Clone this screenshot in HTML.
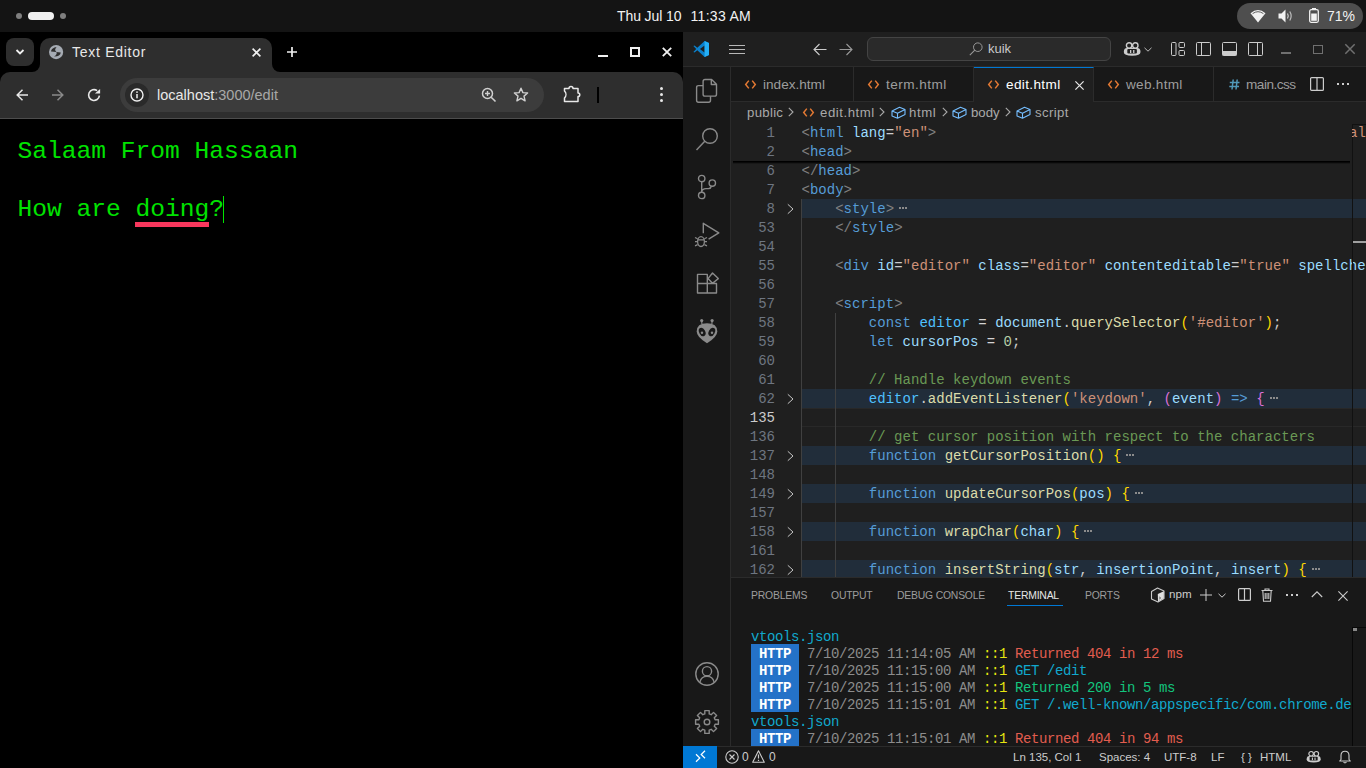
<!DOCTYPE html>
<html><head><meta charset="utf-8">
<style>
*{box-sizing:border-box}
html,body{margin:0;padding:0}
body{width:1366px;height:768px;overflow:hidden;position:relative;background:#141414;font-family:"Liberation Sans",sans-serif;color:#ccc}
.a{position:absolute}
.mono{font-family:"Liberation Mono",monospace}
svg{position:absolute;overflow:visible}
/* editor */
.ln{position:absolute;left:731px;width:44px;height:19px;padding-top:1px;text-align:right;font:14px/19px "Liberation Mono",monospace;color:#6e7681}
.cl{position:absolute;left:801.5px;height:19px;width:565px;overflow:hidden;white-space:pre;padding-top:1px;letter-spacing:0.017px;font:14px/19px "Liberation Mono",monospace;color:#ccc}
.fold{position:absolute;left:801px;width:565px;height:19px;background:#212d3a}
.t{color:#808080}.n{color:#569cd6}.at{color:#9cdcfe}.s{color:#ce9178}.k{color:#569cd6}.v{color:#9cdcfe}.c{color:#4fc1ff}
.f{color:#dcdcaa}.cm{color:#6a9955}.b1{color:#ffd700}.b2{color:#da70d6}.op{color:#d4d4d4}.nm{color:#b5cea8}
.el{display:inline-block;position:relative;width:14px;height:1px}.el::before{content:"";position:absolute;left:5px;top:-5px;width:2px;height:2px;background:#8b8b8b;box-shadow:3px 0 #8b8b8b,6px 0 #8b8b8b}
.tr{position:absolute;left:751px;height:17px;white-space:pre;font:14px/17px "Liberation Mono",monospace;letter-spacing:-0.4px}
.hb{color:#fff;font-weight:bold}
.gy{color:#8c8c8c}.yl{color:#e5e510}.rd{color:#e25d4f}.cy{color:#11a8cd}.gr{color:#13c47d}
.tab{position:absolute;top:67px;height:34px;background:#181818;border-right:1px solid #2b2b2b;font-size:13.5px;color:#9d9d9d}
</style></head>
<body>

<!-- ============ GNOME TOP BAR ============ -->
<div class="a" style="left:0;top:0;width:1366px;height:32px;background:#141414"></div>
<div class="a" style="left:16px;top:13px;width:6px;height:6px;border-radius:3px;background:#7f7f7f"></div>
<div class="a" style="left:28px;top:12px;width:26px;height:8px;border-radius:4px;background:#f0f0f0"></div>
<div class="a" style="left:60px;top:13px;width:6px;height:6px;border-radius:3px;background:#7f7f7f"></div>
<div class="a" style="left:617px;top:8px;font-size:14px;line-height:17px;letter-spacing:-0.1px;color:#f2f2f2;white-space:pre">Thu Jul 10</div>
<div class="a" style="left:690.5px;top:8px;font-size:14px;line-height:17px;letter-spacing:0.3px;color:#f2f2f2;white-space:pre">11:33 AM</div>
<div class="a" style="left:1237px;top:3px;width:126px;height:26px;border-radius:13px;background:#4e4e4e"></div>
<!-- wifi -->
<svg style="left:1250px;top:9px" width="16" height="14" viewBox="0 0 16 14"><path d="M0.5 4.2 Q8 -2 15.5 4.2 L8 13.5 Z" fill="#f2f2f2"/><path d="M2.6 4.6 Q8 0.8 13.4 4.6" stroke="#4e4e4e" stroke-width="0.9" fill="none"/></svg>
<!-- volume -->
<svg style="left:1278px;top:9px" width="16" height="14" viewBox="0 0 16 14"><path d="M0.5 4.5 H3.5 L7.5 0.5 V13.5 L3.5 9.5 H0.5 Z" fill="#f2f2f2"/><path d="M9.5 4.5 Q11 7 9.5 9.5" stroke="#cfcfcf" stroke-width="1.2" fill="none"/><path d="M11.8 2.5 Q14.5 7 11.8 11.5" stroke="#bdbdbd" stroke-width="1.2" fill="none"/></svg>
<!-- battery -->
<svg style="left:1309px;top:8px" width="10" height="15" viewBox="0 0 10 15"><rect x="3" y="0" width="4" height="2" fill="#f2f2f2"/><rect x="0.7" y="1.7" width="8.6" height="12.6" rx="1.5" fill="none" stroke="#f2f2f2" stroke-width="1.3"/><rect x="2.2" y="5.5" width="5.6" height="7.3" fill="#f2f2f2"/></svg>
<div class="a" style="left:1327px;top:8px;font-size:14px;line-height:17px;color:#f2f2f2">71%</div>

<!-- ============ CHROME ============ -->
<div class="a" style="left:0;top:32px;width:683px;height:736px;background:#000"></div>
<!-- tab search button -->
<div class="a" style="left:6px;top:38px;width:28px;height:28px;border-radius:8px;background:#2e2e2e"></div>
<svg style="left:14px;top:47px" width="12" height="10" viewBox="0 0 12 10"><path d="M2.5 3 L6 6.5 L9.5 3" stroke="#f0f0f0" stroke-width="1.8" fill="none"/></svg>
<!-- active tab -->
<div class="a" style="left:40px;top:38px;width:232px;height:40px;border-radius:10px 10px 0 0;background:#2e2e2e"></div>
<div class="a" style="left:32px;top:64px;width:8px;height:8px;background:#2e2e2e"></div>
<div class="a" style="left:32px;top:64px;width:8px;height:8px;border-radius:0 0 8px 0;background:#000"></div>
<div class="a" style="left:272px;top:64px;width:9px;height:8px;background:#2e2e2e"></div>
<div class="a" style="left:272px;top:64px;width:9px;height:8px;border-radius:0 0 0 9px;background:#000"></div>
<!-- globe -->
<svg style="left:47px;top:43px" width="18" height="18" viewBox="0 0 18 18"><circle cx="9.1" cy="9.1" r="7.1" fill="#a5abb3"/><path d="M9.6 4.3 C7 4.2 4.2 5.9 4.1 8.4 L9.4 8.9 C7.7 7.7 7.7 5.9 9.6 4.3 Z M9.4 8.9 L13.8 9.6 C13.4 12.2 11.2 13.6 7 13.5 C8.9 12.2 10.3 11 9.4 8.9 Z" fill="#2e2e2e"/></svg>
<div class="a" style="left:72px;top:44px;font-size:14px;line-height:17px;letter-spacing:0.72px;color:#e8e8e8">Text Editor</div>
<svg style="left:251.5px;top:47.5px" width="9" height="9" viewBox="0 0 9 9"><path d="M0.6 0.6 L8.4 8.4 M8.4 0.6 L0.6 8.4" stroke="#f0f0f0" stroke-width="1.6"/></svg>
<svg style="left:287px;top:47px" width="10" height="10" viewBox="0 0 10 10"><path d="M5 0 V10 M0 5 H10" stroke="#f0f0f0" stroke-width="1.7"/></svg>
<!-- window controls -->
<div class="a" style="left:598px;top:55px;width:10px;height:2px;background:#f0f0f0"></div>
<div class="a" style="left:630px;top:47px;width:10px;height:10px;border:2px solid #f0f0f0"></div>
<svg style="left:662px;top:47px" width="10" height="10" viewBox="0 0 10 10"><path d="M0.8 0.8 L9.2 9.2 M9.2 0.8 L0.8 9.2" stroke="#f0f0f0" stroke-width="1.8"/></svg>
<!-- toolbar -->
<div class="a" style="left:0;top:72px;width:683px;height:46px;border-radius:10px 10px 0 0;background:#2e2e2e"></div>
<div class="a" style="left:0;top:118px;width:683px;height:1px;background:#4d4d4d"></div>
<svg style="left:16px;top:89px" width="12" height="12" viewBox="0 0 12 12"><path d="M12 6 H1.2 M6.5 0.8 L1.2 6 L6.5 11.2" stroke="#e8e8e8" stroke-width="1.5" fill="none"/></svg>
<svg style="left:52px;top:89px" width="12" height="12" viewBox="0 0 12 12"><path d="M0 6 H10.8 M5.5 0.8 L10.8 6 L5.5 11.2" stroke="#8a8a8a" stroke-width="1.5" fill="none"/></svg>
<svg style="left:87px;top:88px" width="14" height="14" viewBox="0 0 14 14"><path d="M12.4 7.6 A5.4 5.4 0 1 1 10.1 2.6" stroke="#e8e8e8" stroke-width="1.6" fill="none"/><path d="M7.9 5.5 H13.1 V0.9 Z" fill="#e8e8e8"/></svg>
<div class="a" style="left:120px;top:78px;width:424px;height:34px;border-radius:17px;background:#3c3c3c"></div>
<div class="a" style="left:125px;top:83px;width:24px;height:24px;border-radius:12px;background:#2a2a2a"></div>
<svg style="left:130px;top:88px" width="14" height="14" viewBox="0 0 14 14"><circle cx="7" cy="7" r="6" stroke="#f0f0f0" stroke-width="1.4" fill="none"/><rect x="6.25" y="6" width="1.5" height="4.3" fill="#f0f0f0"/><rect x="6.25" y="3.4" width="1.5" height="1.5" fill="#f0f0f0"/></svg>
<div class="a" style="left:157px;top:86px;font-size:14.5px;line-height:18px;color:#e8e8e8;white-space:pre">localhost<span style="color:#a8a8a8">:3000/edit</span></div>
<svg style="left:481px;top:87px" width="16" height="16" viewBox="0 0 16 16"><circle cx="6.5" cy="6.5" r="5" stroke="#d0d0d0" stroke-width="1.5" fill="none"/><path d="M10.2 10.2 L14.5 14.5" stroke="#d0d0d0" stroke-width="1.6"/><path d="M6.5 4 V9 M4 6.5 H9" stroke="#d0d0d0" stroke-width="1.4"/></svg>
<svg style="left:513px;top:87px" width="16" height="16" viewBox="0 0 16 16"><path d="M8 1.2 L9.9 5.6 L14.6 6 L11 9.1 L12.1 13.8 L8 11.3 L3.9 13.8 L5 9.1 L1.4 6 L6.1 5.6 Z" stroke="#d0d0d0" stroke-width="1.4" fill="none" stroke-linejoin="round"/></svg>
<svg style="left:563px;top:85px" width="18" height="18" viewBox="0 0 18 18"><path d="M1.5 3.5 H6 A2 2 0 0 1 10 3.5 H15 V8 A1.8 1.8 0 0 1 15 11.6 V16.5 H1.5 V13 A5 5 0 0 0 1.5 6 Z" stroke="#e8e8e8" stroke-width="1.5" fill="none" stroke-linejoin="round"/></svg>
<div class="a" style="left:597px;top:87px;width:2px;height:16px;background:#000"></div>
<div class="a" style="left:659.5px;top:86.7px;width:3.4px;height:3.4px;border-radius:1.7px;background:#e8e8e8"></div>
<div class="a" style="left:659.5px;top:92.7px;width:3.4px;height:3.4px;border-radius:1.7px;background:#e8e8e8"></div>
<div class="a" style="left:659.5px;top:98.7px;width:3.4px;height:3.4px;border-radius:1.7px;background:#e8e8e8"></div>
<!-- page -->
<div class="a mono" style="left:17.5px;top:137px;font-size:24.6px;line-height:29px;color:#00e300;white-space:pre">Salaam From Hassaan</div>
<div class="a mono" style="left:17.5px;top:195px;font-size:24.6px;line-height:29px;color:#00e300;white-space:pre">How are doing?</div>
<div class="a" style="left:135px;top:222px;width:74px;height:5px;background:#f8375d"></div>
<div class="a" style="left:223px;top:196px;width:1px;height:27px;background:#00e300"></div>

<!-- ============ VS CODE ============ -->
<div class="a" style="left:683px;top:32px;width:683px;height:736px;background:#1f1f1f"></div>
<!-- title bar -->
<div class="a" style="left:683px;top:32px;width:683px;height:35px;background:#1f1f1f;border-bottom:1px solid #2b2b2b"></div>

<!-- VS logo -->
<svg style="left:693px;top:41px" width="16" height="16" viewBox="0 0 16 16"><path d="M11.6 0 L16 2.1 V13.9 L11.6 16 L4.3 9.3 L1.5 11.6 L0.4 10.9 L3.2 8 L0.4 5.1 L1.5 4.4 L4.3 6.7 Z M6.9 8 L11.6 11.4 V4.6 Z" fill="#0b80cc" fill-rule="evenodd"/><path d="M11.6 0 L16 2.1 V13.9 L11.6 16 Z" fill="#24aef5"/></svg>
<!-- hamburger -->
<svg style="left:729px;top:44px" width="16" height="11" viewBox="0 0 16 11"><path d="M0 1.5 H16 M0 5.5 H16 M0 9.5 H16" stroke="#b8b8b8" stroke-width="1"/></svg>
<svg style="left:813px;top:43px" width="14" height="13" viewBox="0 0 14 13"><path d="M13.5 6.5 H1 M6.5 1 L1 6.5 L6.5 12" stroke="#cccccc" stroke-width="1.1" fill="none"/></svg>
<svg style="left:839px;top:43px" width="14" height="13" viewBox="0 0 14 13"><path d="M0.5 6.5 H13 M7.5 1 L13 6.5 L7.5 12" stroke="#9a9a9a" stroke-width="1.1" fill="none"/></svg>
<!-- command center -->
<div class="a" style="left:867px;top:37px;width:244px;height:24px;border-radius:6px;background:#2a2a2a;border:1px solid #444"></div>
<svg style="left:969px;top:42px" width="14" height="14" viewBox="0 0 14 14"><circle cx="8.8" cy="5.2" r="4.3" stroke="#9a9a9a" stroke-width="1" fill="none"/><path d="M5.8 8.2 L0.8 13.2" stroke="#9a9a9a" stroke-width="1.1"/></svg>
<div class="a" style="left:988px;top:40px;font-size:13px;line-height:17px;color:#c8c8c8">kuik</div>
<!-- copilot -->
<svg style="left:1123px;top:41px" width="18" height="16" viewBox="0 0 18 16"><circle cx="6.1" cy="4.5" r="2.7" stroke="#cccccc" stroke-width="1.4" fill="none"/><circle cx="12.3" cy="4.5" r="2.7" stroke="#cccccc" stroke-width="1.4" fill="none"/><path d="M0.8 11 Q0.8 7 4 7 H14.2 Q17.5 7 17.5 11 Q17.5 14.8 9.2 14.8 Q0.8 14.8 0.8 11 Z" fill="#cccccc"/><rect x="4.3" y="8" width="9.6" height="4.6" rx="1" fill="#1f1f1f"/><rect x="7" y="9" width="1.3" height="3" fill="#cccccc"/><rect x="10.1" y="9" width="1.3" height="3" fill="#cccccc"/></svg>
<svg style="left:1144px;top:47px" width="8" height="5" viewBox="0 0 8 5"><path d="M0.5 0.8 L4 4.2 L7.5 0.8" stroke="#bbbbbb" stroke-width="1" fill="none"/></svg>
<!-- layout icons -->
<svg style="left:1171px;top:42px" width="14" height="14" viewBox="0 0 14 14"><rect x="0.5" y="0.5" width="4.5" height="13" rx="1" stroke="#cccccc" fill="none"/><rect x="8" y="0.5" width="5.5" height="5" rx="1" stroke="#cccccc" fill="none"/><rect x="8" y="8.5" width="5.5" height="5" rx="1" stroke="#cccccc" fill="none"/></svg>
<svg style="left:1196px;top:42px" width="15" height="14" viewBox="0 0 15 14"><rect x="0.5" y="0.5" width="14" height="13" rx="1" stroke="#cccccc" fill="none"/><path d="M5.5 0.5 V13.5" stroke="#cccccc"/></svg>
<svg style="left:1222px;top:42px" width="15" height="14" viewBox="0 0 15 14"><rect x="0.5" y="0.5" width="14" height="13" rx="1" stroke="#cccccc" fill="none"/><rect x="0.5" y="9" width="14" height="4.5" fill="#cccccc"/></svg>
<svg style="left:1248px;top:42px" width="15" height="14" viewBox="0 0 15 14"><rect x="0.5" y="0.5" width="14" height="13" rx="1" stroke="#cccccc" fill="none"/><path d="M9.5 0.5 V13.5" stroke="#cccccc"/></svg>
<!-- vs window controls -->
<div class="a" style="left:1281px;top:52px;width:10px;height:1.5px;background:#707070"></div>
<div class="a" style="left:1313px;top:44.5px;width:9.5px;height:9.5px;border:1.5px solid #707070"></div>
<svg style="left:1345px;top:44px" width="10" height="10" viewBox="0 0 10 10"><path d="M0.3 0.3 L9.7 9.7 M9.7 0.3 L0.3 9.7" stroke="#707070" stroke-width="1.5"/></svg>

<!-- activity bar -->
<div class="a" style="left:683px;top:67px;width:48px;height:679px;background:#181818;border-right:1px solid #2b2b2b"></div>
<svg style="left:695px;top:78px" width="24" height="26" viewBox="0 0 24 26"><path d="M8 7.6 H3.5 Q1.6 7.6 1.6 9.5 V22.3 Q1.6 24.2 3.5 24.2 H13.6 Q15.5 24.2 15.5 22.3 V18.2" stroke="#8a8a8a" stroke-width="1.4" fill="none"/><path d="M10 1.5 H16.6 L21.5 6.3 V16.2 Q21.5 18.1 19.6 18.1 H10 Q8.1 18.1 8.1 16.2 V3.4 Q8.1 1.5 10 1.5 Z M16.3 1.5 V6.5 H21.5" stroke="#8a8a8a" stroke-width="1.4" fill="none" stroke-linejoin="round"/></svg>
<svg style="left:695px;top:127px" width="24" height="24" viewBox="0 0 24 24"><circle cx="15" cy="9" r="7.3" stroke="#8a8a8a" stroke-width="1.4" fill="none"/><path d="M10 14 L1.5 23" stroke="#868686" stroke-width="1.5"/></svg>
<svg style="left:697px;top:174px" width="20" height="26" viewBox="0 0 20 26"><circle cx="4.7" cy="4.6" r="3.2" stroke="#8a8a8a" stroke-width="1.4" fill="none"/><circle cx="4.7" cy="21.4" r="3.2" stroke="#8a8a8a" stroke-width="1.4" fill="none"/><circle cx="15.3" cy="9.1" r="3.2" stroke="#8a8a8a" stroke-width="1.4" fill="none"/><path d="M4.7 7.8 V18.2 M4.7 17.8 Q5.3 14.8 9 14.6 H11.5 Q13.8 14.4 14.4 12.2" stroke="#8a8a8a" stroke-width="1.4" fill="none"/></svg>
<svg style="left:694px;top:222px" width="26" height="26" viewBox="0 0 26 26"><path d="M9.3 11.3 V1.3 L24.8 10.8 L14.6 17.2" stroke="#8a8a8a" stroke-width="1.4" fill="none" stroke-linejoin="round"/><ellipse cx="7" cy="19.6" rx="3.4" ry="4.9" stroke="#8a8a8a" stroke-width="1.3" fill="none"/><path d="M3.8 17.8 H10.2 M1 15.5 L3.6 16.8 M1 19.7 H3.6 M1 23.9 L3.6 22.6 M13 15.5 L10.4 16.8 M13 19.7 H10.4 M13 23.9 L10.4 22.6" stroke="#8a8a8a" stroke-width="1.2" fill="none"/></svg>
<svg style="left:696px;top:272px" width="24" height="24" viewBox="0 0 24 24"><path d="M1.5 2.4 H11.3 V21 H1.5 Z M1.5 11.5 H20.5 V21 H11.3 M16.5 1 L22.3 6.6 L16.5 11.3 L12 6.6 Z" stroke="#8a8a8a" stroke-width="1.4" fill="none" stroke-linejoin="round"/></svg>
<svg style="left:696px;top:318px" width="22" height="26" viewBox="0 0 22 26"><path d="M11 5.3 Q21.3 5.3 21.3 13.5 Q21.3 19 11 25.2 Q0.7 19 0.7 13.5 Q0.7 5.3 11 5.3 Z" fill="#8a8a8a"/><path d="M5.7 2.6 L5.9 6 M16.1 2.6 L15.9 6" stroke="#8a8a8a" stroke-width="1.1"/><circle cx="5.7" cy="2.6" r="1.6" fill="#8a8a8a"/><circle cx="16.1" cy="2.6" r="1.6" fill="#8a8a8a"/><ellipse cx="6.2" cy="14" rx="3" ry="4.4" transform="rotate(-28 6.2 14)" fill="#181818"/><ellipse cx="15.8" cy="14" rx="3" ry="4.4" transform="rotate(28 15.8 14)" fill="#181818"/><circle cx="6" cy="14.7" r="1.2" fill="#8a8a8a"/><circle cx="16" cy="14.7" r="1.2" fill="#8a8a8a"/></svg>
<svg style="left:695px;top:662px" width="24" height="24" viewBox="0 0 24 24"><circle cx="12" cy="12" r="11.2" stroke="#8a8a8a" stroke-width="1.4" fill="none"/><circle cx="12" cy="9.2" r="4.6" stroke="#8a8a8a" stroke-width="1.4" fill="none"/><path d="M4.8 20.3 Q6.3 14.3 12 14.3 Q17.7 14.3 19.2 20.3" stroke="#8a8a8a" stroke-width="1.4" fill="none"/></svg>
<svg style="left:695px;top:710px" width="24" height="24" viewBox="0 0 24 24"><path d="M9.80 3.89 L9.80 0.60 L14.20 0.60 L14.20 3.89 L16.18 4.71 L18.51 2.38 L21.62 5.49 L19.29 7.82 L20.11 9.80 L23.40 9.80 L23.40 14.20 L20.11 14.20 L19.29 16.18 L21.62 18.51 L18.51 21.62 L16.18 19.29 L14.20 20.11 L14.20 23.40 L9.80 23.40 L9.80 20.11 L7.82 19.29 L5.49 21.62 L2.38 18.51 L4.71 16.18 L3.89 14.20 L0.60 14.20 L0.60 9.80 L3.89 9.80 L4.71 7.82 L2.38 5.49 L5.49 2.38 L7.82 4.71 Z" stroke="#8a8a8a" stroke-width="1.4" fill="none" stroke-linejoin="round"/><circle cx="12" cy="12" r="2.8" stroke="#8a8a8a" stroke-width="1.4" fill="none"/></svg>

<!-- tabs -->
<div class="a" style="left:731px;top:67px;width:635px;height:35px;background:#181818;border-bottom:1px solid #2b2b2b"></div>
<div class="tab" style="left:731px;width:123px"></div>
<div class="tab" style="left:854px;width:120px"></div>
<div class="a" style="left:974px;top:67px;width:120px;height:35px;background:#1f1f1f;border-top:1px solid #0078d4;border-right:1px solid #2b2b2b"></div>
<div class="tab" style="left:1094px;width:120px"></div>
<svg style="left:745px;top:80px" width="11" height="9" viewBox="0 0 11 9"><path d="M3.8 0.6 L0.7 4.5 L3.8 8.4 M7.2 0.6 L10.3 4.5 L7.2 8.4" stroke="#e37933" stroke-width="1.5" fill="none"/></svg>
<div class="a" style="left:763px;top:76px;font-size:13.6px;line-height:17px;color:#9d9d9d">index.html</div>
<svg style="left:868px;top:80px" width="11" height="9" viewBox="0 0 11 9"><path d="M3.8 0.6 L0.7 4.5 L3.8 8.4 M7.2 0.6 L10.3 4.5 L7.2 8.4" stroke="#e37933" stroke-width="1.5" fill="none"/></svg>
<div class="a" style="left:886px;top:76px;font-size:13.6px;line-height:17px;letter-spacing:0.45px;color:#9d9d9d">term.html</div>
<svg style="left:988px;top:80px" width="11" height="9" viewBox="0 0 11 9"><path d="M3.8 0.6 L0.7 4.5 L3.8 8.4 M7.2 0.6 L10.3 4.5 L7.2 8.4" stroke="#e37933" stroke-width="1.5" fill="none"/></svg>
<div class="a" style="left:1006px;top:76px;font-size:13.6px;line-height:17px;letter-spacing:0.35px;color:#ffffff">edit.html</div>
<svg style="left:1075px;top:80.5px" width="9" height="9" viewBox="0 0 9 9"><path d="M0.4 0.4 L8.6 8.6 M8.6 0.4 L0.4 8.6" stroke="#e8e8e8" stroke-width="1.2"/></svg>
<svg style="left:1108px;top:80px" width="11" height="9" viewBox="0 0 11 9"><path d="M3.8 0.6 L0.7 4.5 L3.8 8.4 M7.2 0.6 L10.3 4.5 L7.2 8.4" stroke="#e37933" stroke-width="1.5" fill="none"/></svg>
<div class="a" style="left:1126px;top:76px;font-size:13.6px;line-height:17px;letter-spacing:0.28px;color:#9d9d9d">web.html</div>
<svg style="left:1229px;top:79px" width="11" height="11" viewBox="0 0 11 11"><path d="M4.2 0.5 L3 10.5 M8.2 0.5 L7 10.5 M0.8 3.6 H10.5 M0.3 7.4 H10" stroke="#519aba" stroke-width="1.5" fill="none"/></svg>
<div class="a" style="left:1246px;top:76px;font-size:13.6px;line-height:17px;letter-spacing:-0.5px;color:#9d9d9d">main.css</div>
<svg style="left:1310px;top:77px" width="14" height="14" viewBox="0 0 14 14"><rect x="0.6" y="0.6" width="12.8" height="12.8" rx="1" stroke="#cccccc" stroke-width="1.2" fill="none"/><path d="M7 0.6 V13.4" stroke="#cccccc" stroke-width="1.2"/></svg>
<div class="a" style="left:1337px;top:83px;width:2px;height:2px;background:#ccc"></div>
<div class="a" style="left:1342px;top:83px;width:2px;height:2px;background:#ccc"></div>
<div class="a" style="left:1347px;top:83px;width:2px;height:2px;background:#ccc"></div>

<!-- breadcrumbs -->

<!-- breadcrumbs -->
<div class="a" style="left:747px;top:104px;font-size:13.2px;line-height:17px;letter-spacing:0.3px;color:#a9a9a9;white-space:pre">public</div>
<svg style="left:788px;top:107px" width="6" height="10" viewBox="0 0 6 10"><path d="M0.8 0.8 L5 5 L0.8 9.2" stroke="#a9a9a9" stroke-width="1.1" fill="none"/></svg>
<svg style="left:803px;top:108px" width="11" height="9" viewBox="0 0 11 9"><path d="M3.8 0.6 L0.7 4.5 L3.8 8.4 M7.2 0.6 L10.3 4.5 L7.2 8.4" stroke="#e37933" stroke-width="1.5" fill="none"/></svg>
<div class="a" style="left:820px;top:104px;font-size:13.2px;line-height:17px;letter-spacing:0.55px;color:#a9a9a9;white-space:pre">edit.html</div>
<svg style="left:879px;top:107px" width="6" height="10" viewBox="0 0 6 10"><path d="M0.8 0.8 L5 5 L0.8 9.2" stroke="#a9a9a9" stroke-width="1.1" fill="none"/></svg>
<svg style="left:891px;top:105px" width="15" height="14" viewBox="0 0 15 14"><path d="M1 6 L8.5 2.3 L14 4.6 V9.6 L6.5 13.3 L1 11 Z M1 6 L6.5 8.3 L14 4.6 M6.5 8.3 V13.3" stroke="#75beff" stroke-width="1.1" fill="none" stroke-linejoin="round"/></svg>
<div class="a" style="left:909px;top:104px;font-size:13.2px;line-height:17px;letter-spacing:0.6px;color:#a9a9a9;white-space:pre">html</div>
<svg style="left:942px;top:107px" width="6" height="10" viewBox="0 0 6 10"><path d="M0.8 0.8 L5 5 L0.8 9.2" stroke="#a9a9a9" stroke-width="1.1" fill="none"/></svg>
<svg style="left:952px;top:105px" width="15" height="14" viewBox="0 0 15 14"><path d="M1 6 L8.5 2.3 L14 4.6 V9.6 L6.5 13.3 L1 11 Z M1 6 L6.5 8.3 L14 4.6 M6.5 8.3 V13.3" stroke="#75beff" stroke-width="1.1" fill="none" stroke-linejoin="round"/></svg>
<div class="a" style="left:971px;top:104px;font-size:13.2px;line-height:17px;color:#a9a9a9;white-space:pre">body</div>
<svg style="left:1005px;top:107px" width="6" height="10" viewBox="0 0 6 10"><path d="M0.8 0.8 L5 5 L0.8 9.2" stroke="#a9a9a9" stroke-width="1.1" fill="none"/></svg>
<svg style="left:1016px;top:105px" width="15" height="14" viewBox="0 0 15 14"><path d="M1 6 L8.5 2.3 L14 4.6 V9.6 L6.5 13.3 L1 11 Z M1 6 L6.5 8.3 L14 4.6 M6.5 8.3 V13.3" stroke="#75beff" stroke-width="1.1" fill="none" stroke-linejoin="round"/></svg>
<div class="a" style="left:1035px;top:104px;font-size:13.2px;line-height:17px;letter-spacing:0.4px;color:#a9a9a9;white-space:pre">script</div>

<!-- editor -->
<div class="a" style="left:801px;top:408px;width:565px;height:19px;border-top:1px solid #282828;border-bottom:1px solid #282828"></div>
<div class="fold" style="top:199px"></div>
<div class="fold" style="top:389px"></div>
<div class="fold" style="top:446px"></div>
<div class="fold" style="top:484px"></div>
<div class="fold" style="top:522px"></div>
<div class="fold" style="top:560px"></div>
<div class="a" style="left:801px;top:199px;width:1px;height:379px;background:#404040"></div>
<div class="a" style="left:835px;top:313px;width:1px;height:265px;background:#404040"></div>
<div class="ln" style="top:123px;color:#6e7681">1</div>
<div class="ln" style="top:142px;color:#6e7681">2</div>
<div class="ln" style="top:161px;color:#6e7681">6</div>
<div class="ln" style="top:180px;color:#6e7681">7</div>
<div class="ln" style="top:199px;color:#6e7681">8</div>
<div class="ln" style="top:218px;color:#6e7681">53</div>
<div class="ln" style="top:237px;color:#6e7681">54</div>
<div class="ln" style="top:256px;color:#6e7681">55</div>
<div class="ln" style="top:275px;color:#6e7681">56</div>
<div class="ln" style="top:294px;color:#6e7681">57</div>
<div class="ln" style="top:313px;color:#6e7681">58</div>
<div class="ln" style="top:332px;color:#6e7681">59</div>
<div class="ln" style="top:351px;color:#6e7681">60</div>
<div class="ln" style="top:370px;color:#6e7681">61</div>
<div class="ln" style="top:389px;color:#6e7681">62</div>
<div class="ln" style="top:408px;color:#cccccc">135</div>
<div class="ln" style="top:427px;color:#6e7681">136</div>
<div class="ln" style="top:446px;color:#6e7681">137</div>
<div class="ln" style="top:465px;color:#6e7681">148</div>
<div class="ln" style="top:484px;color:#6e7681">149</div>
<div class="ln" style="top:503px;color:#6e7681">157</div>
<div class="ln" style="top:522px;color:#6e7681">158</div>
<div class="ln" style="top:541px;color:#6e7681">161</div>
<div class="ln" style="top:560px;color:#6e7681">162</div>
<svg style="left:787px;top:204px" width="7" height="10" viewBox="0 0 7 10"><path d="M0.8 0.3 L6 5 L0.8 9.7" stroke="#c5c5c5" stroke-width="1" fill="none"/></svg>
<svg style="left:787px;top:394px" width="7" height="10" viewBox="0 0 7 10"><path d="M0.8 0.3 L6 5 L0.8 9.7" stroke="#c5c5c5" stroke-width="1" fill="none"/></svg>
<svg style="left:787px;top:451px" width="7" height="10" viewBox="0 0 7 10"><path d="M0.8 0.3 L6 5 L0.8 9.7" stroke="#c5c5c5" stroke-width="1" fill="none"/></svg>
<svg style="left:787px;top:489px" width="7" height="10" viewBox="0 0 7 10"><path d="M0.8 0.3 L6 5 L0.8 9.7" stroke="#c5c5c5" stroke-width="1" fill="none"/></svg>
<svg style="left:787px;top:527px" width="7" height="10" viewBox="0 0 7 10"><path d="M0.8 0.3 L6 5 L0.8 9.7" stroke="#c5c5c5" stroke-width="1" fill="none"/></svg>
<svg style="left:787px;top:565px" width="7" height="10" viewBox="0 0 7 10"><path d="M0.8 0.3 L6 5 L0.8 9.7" stroke="#c5c5c5" stroke-width="1" fill="none"/></svg>
<div class="cl" style="top:123px"><span class="t">&lt;</span><span class="n">html</span> <span class="at">lang</span>=<span class="s">"en"</span><span class="t">&gt;</span></div>
<div class="cl" style="top:142px"><span class="t">&lt;</span><span class="n">head</span><span class="t">&gt;</span></div>
<div class="cl" style="top:161px"><span class="t">&lt;/</span><span class="n">head</span><span class="t">&gt;</span></div>
<div class="cl" style="top:180px"><span class="t">&lt;</span><span class="n">body</span><span class="t">&gt;</span></div>
<div class="cl" style="top:199px">    <span class="t">&lt;</span><span class="n">style</span><span class="t">&gt;</span><span class="el"></span></div>
<div class="cl" style="top:218px">    <span class="t">&lt;/</span><span class="n">style</span><span class="t">&gt;</span></div>
<div class="cl" style="top:237px"></div>
<div class="cl" style="top:256px">    <span class="t">&lt;</span><span class="n">div</span> <span class="at">id</span>=<span class="s">"editor"</span> <span class="at">class</span>=<span class="s">"editor"</span> <span class="at">contenteditable</span>=<span class="s">"true"</span> <span class="at">spellcheck</span></div>
<div class="cl" style="top:275px"></div>
<div class="cl" style="top:294px">    <span class="t">&lt;</span><span class="n">script</span><span class="t">&gt;</span></div>
<div class="cl" style="top:313px">        <span class="k">const</span> <span class="c">editor</span> <span class="op">=</span> <span class="v">document</span>.<span class="f">querySelector</span><span class="b1">(</span><span class="s">'#editor'</span><span class="b1">)</span>;</div>
<div class="cl" style="top:332px">        <span class="k">let</span> <span class="v">cursorPos</span> <span class="op">=</span> <span class="nm">0</span>;</div>
<div class="cl" style="top:351px"></div>
<div class="cl" style="top:370px">        <span class="cm">// Handle keydown events</span></div>
<div class="cl" style="top:389px">        <span class="c">editor</span>.<span class="f">addEventListener</span><span class="b1">(</span><span class="s">'keydown'</span>, <span class="b2">(</span><span class="v">event</span><span class="b2">)</span> <span class="k">=&gt;</span> <span class="b2">{</span><span class="el"></span></div>
<div class="cl" style="top:408px"></div>
<div class="cl" style="top:427px">        <span class="cm">// get cursor position with respect to the characters</span></div>
<div class="cl" style="top:446px">        <span class="k">function</span> <span class="f">getCursorPosition</span><span class="b1">()</span> <span class="b1">{</span><span class="el"></span></div>
<div class="cl" style="top:465px"></div>
<div class="cl" style="top:484px">        <span class="k">function</span> <span class="f">updateCursorPos</span><span class="b1">(</span><span class="v">pos</span><span class="b1">)</span> <span class="b1">{</span><span class="el"></span></div>
<div class="cl" style="top:503px"></div>
<div class="cl" style="top:522px">        <span class="k">function</span> <span class="f">wrapChar</span><span class="b1">(</span><span class="v">char</span><span class="b1">)</span> <span class="b1">{</span><span class="el"></span></div>
<div class="cl" style="top:541px"></div>
<div class="cl" style="top:560px">        <span class="k">function</span> <span class="f">insertString</span><span class="b1">(</span><span class="v">str</span>, <span class="v">insertionPoint</span>, <span class="v">insert</span><span class="b1">)</span> <span class="b1">{</span><span class="el"></span></div>
<div class="a" style="left:733px;top:161px;width:617px;height:3px;background:linear-gradient(#000 0,#000 1px,rgba(0,0,0,0.45) 2px,rgba(0,0,0,0) 3px)"></div>
<div class="a" style="left:1352px;top:124px;width:14px;height:453px;border-left:1px solid #111;border-top:1px solid #111"></div>
<div class="cl" style="left:1352px;top:123px;width:14px;overflow:hidden"><span class="s" style="margin-left:-3px">al</span></div>
<div class="a" style="left:1353px;top:241px;width:13px;height:2px;background:#a0a0a0"></div>

<!-- panel -->
<div class="a" style="left:731px;top:577px;width:635px;height:169px;background:#181818;border-top:1px solid #2b2b2b"></div>
<div class="a" style="left:751px;top:590px;font-size:10.4px;line-height:12px;letter-spacing:-0.2px;color:#9d9d9d;white-space:pre">PROBLEMS</div>
<div class="a" style="left:831px;top:590px;font-size:10.4px;line-height:12px;letter-spacing:-0.2px;color:#9d9d9d;white-space:pre">OUTPUT</div>
<div class="a" style="left:897px;top:590px;font-size:10.4px;line-height:12px;letter-spacing:-0.2px;color:#9d9d9d;white-space:pre">DEBUG CONSOLE</div>
<div class="a" style="left:1008px;top:590px;font-size:10.4px;line-height:12px;letter-spacing:-0.2px;color:#e7e7e7;white-space:pre">TERMINAL</div>
<div class="a" style="left:1007px;top:605px;width:56px;height:1px;background:#0078d4"></div>
<div class="a" style="left:1085px;top:590px;font-size:10.4px;line-height:12px;letter-spacing:-0.2px;color:#9d9d9d;white-space:pre">PORTS</div>
<svg style="left:1150px;top:587px" width="16" height="16" viewBox="0 0 16 16"><path d="M7.5 1 L14 4 V11.5 L8 15 L1.5 12 V4.5 Z" fill="#202020" stroke="#cccccc" stroke-width="1.1" stroke-linejoin="round"/><path d="M7.8 7 L13.8 4.2 V11.3 L8 14.6 Z" fill="#e0e0e0"/><path d="M9.3 10 L10.5 11 L9.3 12" stroke="#202020" stroke-width="0.8" fill="none"/></svg>
<div class="a" style="left:1169px;top:587px;font-size:11.6px;line-height:14px;color:#cccccc">npm</div>
<svg style="left:1200px;top:589px" width="12" height="12" viewBox="0 0 12 12"><path d="M6 0 V12 M0 6 H12" stroke="#cccccc" stroke-width="1"/></svg>
<svg style="left:1218px;top:593px" width="8" height="5" viewBox="0 0 8 5"><path d="M0.5 0.8 L4 4.2 L7.5 0.8" stroke="#cccccc" stroke-width="1" fill="none"/></svg>
<svg style="left:1238px;top:588px" width="13" height="13" viewBox="0 0 13 13"><rect x="0.6" y="0.6" width="11.8" height="11.8" rx="1" stroke="#cccccc" stroke-width="1.2" fill="none"/><path d="M6.5 0.6 V12.4" stroke="#cccccc" stroke-width="1.2"/></svg>
<svg style="left:1261px;top:588px" width="12" height="14" viewBox="0 0 12 14"><path d="M0.5 2.5 H11.5 M4 2.5 V1 H8 V2.5 M1.8 2.5 L2.5 13.3 H9.5 L10.2 2.5 M4.2 5 V11 M6 5 V11 M7.8 5 V11" stroke="#cccccc" stroke-width="1.1" fill="none"/></svg>
<div class="a" style="left:1286px;top:594px;width:2px;height:2px;background:#ccc"></div>
<div class="a" style="left:1291px;top:594px;width:2px;height:2px;background:#ccc"></div>
<div class="a" style="left:1296px;top:594px;width:2px;height:2px;background:#ccc"></div>
<svg style="left:1311px;top:591px" width="12" height="7" viewBox="0 0 12 7"><path d="M0.8 6 L6 0.8 L11.2 6" stroke="#cccccc" stroke-width="1.1" fill="none"/></svg>
<svg style="left:1338px;top:591px" width="10" height="10" viewBox="0 0 10 10"><path d="M0.4 0.4 L9.6 9.6 M9.6 0.4 L0.4 9.6" stroke="#cccccc" stroke-width="1.1"/></svg>
<!-- terminal -->
<div class="a" style="left:1352px;top:627px;width:14px;height:119px;border-left:1px solid #080808;border-top:1px solid #080808"></div>
<div class="a" style="left:1353px;top:628px;width:4px;height:3px;background:#888"></div>
<div class="a" style="left:751px;top:644px;width:48px;height:68px;background:#2472c8"></div>
<div class="a" style="left:751px;top:729px;width:48px;height:17px;background:#2472c8"></div>
<div class="a" style="left:731px;top:627px;width:621px;height:119px;overflow:hidden">
<div class="tr" style="left:20px;top:2px"><span class="cy">vtools.json</span></div>
<div class="tr" style="left:20px;top:19px"><span class="hb"> HTTP </span><span class="gy"> 7/10/2025 11:14:05 AM </span><span class="yl">::1</span><span class="rd"> Returned 404 in 12 ms</span></div>
<div class="tr" style="left:20px;top:36px"><span class="hb"> HTTP </span><span class="gy"> 7/10/2025 11:15:00 AM </span><span class="yl">::1</span><span class="cy"> GET /edit</span></div>
<div class="tr" style="left:20px;top:53px"><span class="hb"> HTTP </span><span class="gy"> 7/10/2025 11:15:00 AM </span><span class="yl">::1</span><span class="gr"> Returned 200 in 5 ms</span></div>
<div class="tr" style="left:20px;top:70px"><span class="hb"> HTTP </span><span class="gy"> 7/10/2025 11:15:01 AM </span><span class="yl">::1</span><span class="cy"> GET /.well-known/appspecific/com.chrome.de</span></div>
<div class="tr" style="left:20px;top:87px"><span class="cy">vtools.json</span></div>
<div class="tr" style="left:20px;top:104px"><span class="hb"> HTTP </span><span class="gy"> 7/10/2025 11:15:01 AM </span><span class="yl">::1</span><span class="rd"> Returned 404 in 94 ms</span></div>
</div>
<!-- status bar -->
<div class="a" style="left:683px;top:746px;width:683px;height:22px;background:#181818;border-top:1px solid #2b2b2b"></div>
<div class="a" style="left:683px;top:746px;width:34px;height:22px;background:#0078d4"></div>
<svg style="left:695px;top:750px" width="11" height="13" viewBox="0 0 11 13"><path d="M1 4.3 L4.8 8 L1 11.7 M10 0.8 L6.2 4.5 L10 8.2" stroke="#ffffff" stroke-width="1.2" fill="none"/></svg>
<svg style="left:725px;top:750px" width="14" height="14" viewBox="0 0 14 14"><circle cx="7" cy="7" r="6.2" stroke="#cccccc" stroke-width="1.1" fill="none"/><path d="M4.5 4.5 L9.5 9.5 M9.5 4.5 L4.5 9.5" stroke="#cccccc" stroke-width="1.1"/></svg>
<div class="a" style="left:742px;top:750px;font-size:12px;line-height:14px;color:#cccccc">0</div>
<svg style="left:752px;top:750px" width="13" height="13" viewBox="0 0 13 13"><path d="M6.5 0.8 L12.3 12.2 H0.7 Z" stroke="#cccccc" stroke-width="1.1" fill="none" stroke-linejoin="round"/><path d="M6.5 4.5 V8.5 M6.5 9.8 V11" stroke="#cccccc" stroke-width="1.2"/></svg>
<div class="a" style="left:769px;top:750px;font-size:12px;line-height:14px;color:#cccccc">0</div>
<div class="a" style="left:1013px;top:751px;font-size:11.5px;line-height:13px;color:#cccccc;white-space:pre">Ln 135, Col 1</div>
<div class="a" style="left:1099px;top:751px;font-size:11.5px;line-height:13px;color:#cccccc;white-space:pre">Spaces: 4</div>
<div class="a" style="left:1164px;top:751px;font-size:11.5px;line-height:13px;color:#cccccc;white-space:pre">UTF-8</div>
<div class="a" style="left:1211px;top:751px;font-size:11.5px;line-height:13px;color:#cccccc;white-space:pre">LF</div>
<div class="a" style="left:1241px;top:751px;font-size:11.5px;line-height:13px;color:#cccccc;white-space:pre">{ }</div>
<div class="a" style="left:1260px;top:751px;font-size:11.5px;line-height:13px;color:#cccccc;white-space:pre">HTML</div>
<svg style="left:1306px;top:750px" width="15.12" height="13.44" viewBox="0 0 18 16"><circle cx="6.1" cy="4.5" r="2.7" stroke="#cccccc" stroke-width="1.4" fill="none"/><circle cx="12.3" cy="4.5" r="2.7" stroke="#cccccc" stroke-width="1.4" fill="none"/><path d="M0.8 11 Q0.8 7 4 7 H14.2 Q17.5 7 17.5 11 Q17.5 14.8 9.2 14.8 Q0.8 14.8 0.8 11 Z" fill="#cccccc"/><rect x="4.3" y="8" width="9.6" height="4.6" rx="1" fill="#181818"/><rect x="7" y="9" width="1.3" height="3" fill="#cccccc"/><rect x="10.1" y="9" width="1.3" height="3" fill="#cccccc"/></svg>
<svg style="left:1339px;top:750px" width="12" height="14" viewBox="0 0 12 14"><path d="M6 1.2 Q10 1.2 10 5.5 V9.5 L11.3 11 H0.7 L2 9.5 V5.5 Q2 1.2 6 1.2 Z M4.5 12 Q6 13.8 7.5 12" stroke="#cccccc" stroke-width="1.1" fill="none" stroke-linejoin="round"/></svg>
</body></html>
